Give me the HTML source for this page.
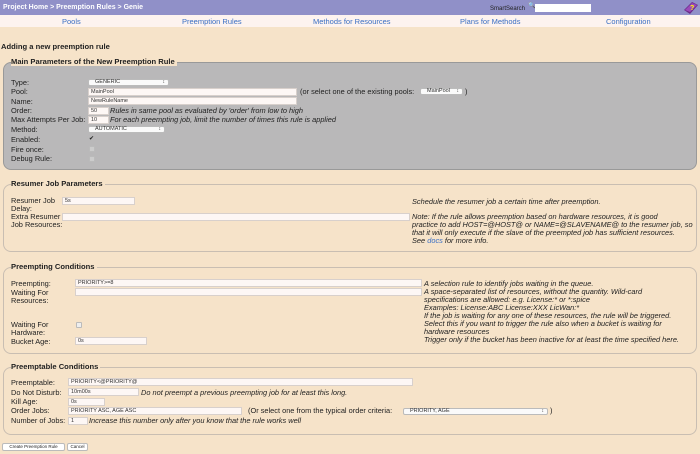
<!DOCTYPE html>
<html><head><meta charset="utf-8"><style>
*{margin:0;padding:0;box-sizing:border-box}
body{width:700px;height:454px;overflow:hidden;background:#f6e3c9;font-family:"Liberation Sans",sans-serif;font-size:7.4px;color:#222;position:relative}
.a{position:absolute;white-space:nowrap;line-height:8px}
.i{font-style:italic}
.b{font-weight:bold}
.in{position:absolute;height:8px;background:#fdf7f5;border:1px solid #d8d0cc;font-size:5.5px;line-height:6px;padding-left:2px;color:#333}
.sel{position:absolute;height:7px;background:#fafafa;border:1px solid #bbb;border-radius:2px;font-size:5.5px;line-height:5px;padding-left:6px;color:#333}
.sel:after{content:"\2195";position:absolute;right:3px;top:0;font-size:5px}
.fs{position:absolute;border:1px solid #c9beb2;border-radius:8px}
.lg{position:absolute;font-weight:bold;font-size:7.6px;background:inherit;line-height:8px}
.nav{position:absolute;top:18px;color:#3a6fc4;font-size:7.5px;line-height:8px}
.cb{position:absolute;width:6px;height:6px;border:1px solid #bbb;background:#eee;border-radius:1px}
</style></head><body>
<div style="position:absolute;left:0;top:0;width:700px;height:15px;background:#9090c8"></div>
<div class="a b" style="left:3px;top:4px;color:#fff;font-size:7px">Project Home &gt; Preemption Rules &gt; Genie</div>
<div class="a" style="left:490px;top:5px;font-size:6px;color:#222">SmartSearch</div>
<div class="a" style="left:528px;top:2px;font-size:6px;color:#dde">🔍</div>
<div style="position:absolute;left:535px;top:4px;width:56px;height:8px;background:#fff"></div>
<svg style="position:absolute;left:683px;top:1px" width="16" height="14" viewBox="0 0 16 14"><path d="M1 9 L9 1 L15 4 L7 13 Z" fill="#6a2a8a"/><path d="M2 9 L9 2 L14 4 L7 11 Z" fill="#9a4ab8"/><text x="7" y="9" font-size="7" fill="#ff0" font-weight="bold" font-family="Liberation Sans">?</text></svg>
<div style="position:absolute;left:0;top:15px;width:700px;height:12px;background:#fdf3ef"></div>
<div class="nav" style="left:62px">Pools</div>
<div class="nav" style="left:182px">Preemption Rules</div>
<div class="nav" style="left:313px">Methods for Resources</div>
<div class="nav" style="left:460px">Plans for Methods</div>
<div class="nav" style="left:606px">Configuration</div>
<div class="a b" style="left:1px;top:43px;font-size:7.6px">Adding a new preemption rule</div>

<div class="fs" style="left:3px;top:62px;width:694px;height:108px;background:#b9b8b9;border-color:#999"></div>
<div class="lg" style="left:11px;top:58px;background:#f6e3c9;padding-right:2px">Main Parameters of the New Preemption Rule</div>
<div class="a" style="left:11px;top:79px">Type:</div>
<div class="sel" style="left:88px;top:79px;width:81px">GENERIC</div>
<div class="a" style="left:11px;top:88px">Pool:</div>
<div class="in" style="left:88px;top:88px;width:209px">MainPool</div>
<div class="a" style="left:300px;top:88px">(or select one of the existing pools:</div>
<div class="sel" style="left:420px;top:88px;width:43px">MainPool</div>
<div class="a" style="left:465px;top:88px">)</div>
<div class="a" style="left:11px;top:98px">Name:</div>
<div class="in" style="left:88px;top:97px;width:209px">NewRuleName</div>
<div class="a" style="left:11px;top:107px">Order:</div>
<div class="in" style="left:88px;top:107px;width:21px">50</div>
<div class="a i" style="left:110px;top:107px">Rules in same pool as evaluated by 'order' from low to high</div>
<div class="a" style="left:11px;top:116px">Max Attempts Per Job:</div>
<div class="in" style="left:88px;top:116px;width:21px">10</div>
<div class="a i" style="left:110px;top:116px">For each preempting job, limit the number of times this rule is applied</div>
<div class="a" style="left:11px;top:126px">Method:</div>
<div class="sel" style="left:88px;top:126px;width:77px">AUTOMATIC</div>
<div class="a" style="left:11px;top:136px">Enabled:</div>
<div class="a" style="left:89px;top:135px;font-size:6px">✔</div>
<div class="a" style="left:11px;top:146px">Fire once:</div>
<div class="cb" style="left:89px;top:146px;background:#ccc"></div>
<div class="a" style="left:11px;top:155px">Debug Rule:</div>
<div class="cb" style="left:89px;top:156px;background:#ccc"></div>

<div class="fs" style="left:3px;top:184px;width:694px;height:68px"></div>
<div class="lg" style="left:11px;top:180px;background:#f6e3c9;padding-right:2px">Resumer Job Parameters</div>
<div class="a" style="left:11px;top:197px">Resumer Job<br>Delay:</div>
<div class="in" style="left:62px;top:197px;width:73px">5s</div>
<div class="a i" style="left:412px;top:198px">Schedule the resumer job a certain time after preemption.</div>
<div class="a" style="left:11px;top:213px">Extra Resumer<br>Job Resources:</div>
<div class="in" style="left:62px;top:213px;width:348px"></div>
<div class="a i" style="left:412px;top:213px">Note: If the rule allows preemption based on hardware resources, it is good<br>practice to add HOST=@HOST@ or NAME=@SLAVENAME@ to the resumer job, so<br>that it will only execute if the slave of the preempted job has sufficient resources.<br>See <span style="color:#3a6fc4">docs</span> for more info.</div>

<div class="fs" style="left:3px;top:267px;width:694px;height:87px"></div>
<div class="lg" style="left:11px;top:263px;background:#f6e3c9;padding-right:2px">Preempting Conditions</div>
<div class="a" style="left:11px;top:280px">Preempting:</div>
<div class="in" style="left:75px;top:279px;width:347px">PRIORITY&gt;=8</div>
<div class="a i" style="left:424px;top:280px">A selection rule to identify jobs waiting in the queue.</div>
<div class="a" style="left:11px;top:289px">Waiting For<br>Resources:</div>
<div class="in" style="left:75px;top:288px;width:347px"></div>
<div class="a i" style="left:424px;top:288px">A space-separated list of resources, without the quantity. Wild-card<br>specifications are allowed: e.g. License:* or *:spice<br>Examples: License:ABC License:XXX LicWan:*<br>If the job is waiting for any one of these resources, the rule will be triggered.<br>Select this if you want to trigger the rule also when a bucket is waiting for<br>hardware resources<br>Trigger only if the bucket has been inactive for at least the time specified here.</div>
<div class="a" style="left:11px;top:321px">Waiting For<br>Hardware:</div>
<div class="cb" style="left:76px;top:322px"></div>
<div class="a" style="left:11px;top:338px">Bucket Age:</div>
<div class="in" style="left:75px;top:337px;width:72px">0s</div>

<div class="fs" style="left:3px;top:367px;width:694px;height:68px"></div>
<div class="lg" style="left:11px;top:363px;background:#f6e3c9;padding-right:2px">Preemptable Conditions</div>
<div class="a" style="left:11px;top:379px">Preemptable:</div>
<div class="in" style="left:68px;top:378px;width:345px">PRIORITY&lt;@PRIORITY@</div>
<div class="a" style="left:11px;top:389px">Do Not Disturb:</div>
<div class="in" style="left:68px;top:388px;width:71px">10m00s</div>
<div class="a i" style="left:141px;top:389px">Do not preempt a previous preempting job for at least this long.</div>
<div class="a" style="left:11px;top:398px">Kill Age:</div>
<div class="in" style="left:68px;top:398px;width:37px">0s</div>
<div class="a" style="left:11px;top:407px">Order Jobs:</div>
<div class="in" style="left:68px;top:407px;width:174px">PRIORITY ASC, AGE ASC</div>
<div class="a" style="left:248px;top:407px">(Or select one from the typical order criteria:</div>
<div class="sel" style="left:403px;top:408px;width:145px">PRIORITY, AGE</div>
<div class="a" style="left:550px;top:407px">)</div>
<div class="a" style="left:11px;top:417px">Number of Jobs:</div>
<div class="in" style="left:68px;top:417px;width:20px">1</div>
<div class="a i" style="left:89px;top:417px">Increase this number only after you know that the rule works well</div>

<div style="position:absolute;left:2px;top:443px;width:63px;height:8px;background:#fff;border:1px solid #bbb;border-radius:2px;font-size:4.5px;line-height:6px;text-align:center">Create Preemption Rule</div>
<div style="position:absolute;left:67px;top:443px;width:21px;height:8px;background:#fff;border:1px solid #bbb;border-radius:2px;font-size:4.5px;line-height:6px;text-align:center">Cancel</div>
</body></html>
